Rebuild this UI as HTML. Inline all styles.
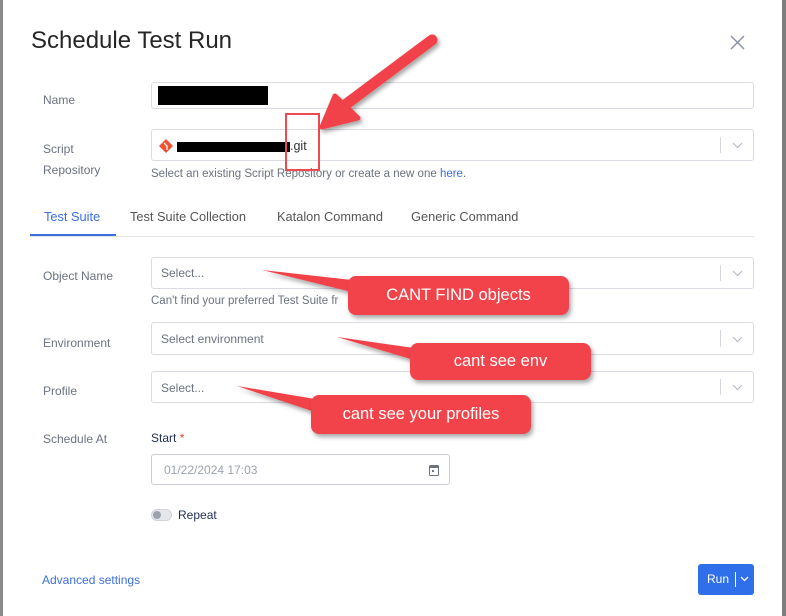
<!DOCTYPE html>
<html><head><meta charset="utf-8"><style>
*{margin:0;padding:0;box-sizing:border-box}
body{width:786px;height:616px;overflow:hidden;background:#fff;font-family:"Liberation Sans",sans-serif;position:relative}
.a{position:absolute}
.lbl{position:absolute;left:43px;font-size:12px;color:#6b7280}
.inp{position:absolute;left:151px;width:603px;border:1px solid #d9dde3;border-radius:3px;background:#fff}
.ph{position:absolute;left:9px;font-size:12px;color:#6b7280}
.sep{position:absolute;right:32px;top:7px;bottom:7px;border-left:1px solid #d4d8de}
.chev{position:absolute;right:10px;top:50%;margin-top:-5px}
.co{position:absolute;background:#f2434a;color:#fff;font-size:16.5px;border-radius:8px;text-align:center;box-shadow:2px 3px 5px rgba(0,0,0,.35)}
.tab{position:absolute;top:209px;font-size:12.8px;color:#555}
</style></head><body>
<div class="a" style="left:0;top:0;width:3px;height:616px;background:#8a8a8a"></div>
<div class="a" style="left:782px;top:0;width:4px;height:616px;background:#7d7d7d"></div>
<div class="a" style="left:31px;top:27px;font-size:24px;color:#262626">Schedule Test Run</div>
<svg class="a" style="left:730px;top:35px" width="15" height="15"><path d="M1 1L14 14M14 1L1 14" stroke="#8a94a6" stroke-width="1.5"/></svg>

<div class="lbl" style="top:93px">Name</div>
<div class="inp" style="top:82px;height:27px"></div>
<div class="a" style="left:158px;top:86px;width:110px;height:19px;background:#000"></div>

<div class="lbl" style="top:139px;line-height:21px">Script<br>Repository</div>
<div class="inp" style="top:129px;height:32px"><div class="sep"></div>
<svg class="chev" width="11" height="10"><path d="M1 3l4.5 4.5L10 3" stroke="#b8bec7" fill="none" stroke-width="1.2"/></svg></div>
<svg class="a" style="left:159px;top:139px" width="14" height="14"><path d="M7 0L14 7L7 14L0 7Z" fill="#f05133"/><path d="M5 4l3 3v4" stroke="#fff" stroke-width="1.3" fill="none"/></svg>
<div class="a" style="left:177px;top:142px;width:113px;height:10px;background:#000"></div>
<div class="a" style="left:290px;top:139px;font-size:12.5px;color:#333">.git</div>
<div class="a" style="left:151px;top:168px;font-size:11.5px;color:#6b7280">Select an existing Script Repository or create a new one <span style="color:#3b6fe0">here</span>.</div>
<div class="a" style="left:285px;top:113px;width:35px;height:58px;border:2px solid #ee4a4f"></div>

<div class="tab" style="left:44px;color:#3b6fe0">Test Suite</div>
<div class="tab" style="left:130px">Test Suite Collection</div>
<div class="tab" style="left:277px">Katalon Command</div>
<div class="tab" style="left:411px">Generic Command</div>
<div class="a" style="left:30px;top:236px;width:724px;height:1px;background:#e3e6ea"></div>
<div class="a" style="left:30px;top:234px;width:86px;height:2px;background:#3b6fe0"></div>

<div class="lbl" style="top:269px">Object Name</div>
<div class="inp" style="top:257px;height:32px"><div class="ph" style="top:8px">Select...</div><div class="sep"></div>
<svg class="chev" width="11" height="10"><path d="M1 3l4.5 4.5L10 3" stroke="#b8bec7" fill="none" stroke-width="1.2"/></svg></div>
<div class="a" style="left:151px;top:295px;font-size:11.5px;color:#6b7280">Can't find your preferred Test Suite fr</div>

<div class="lbl" style="top:336px">Environment</div>
<div class="inp" style="top:322px;height:33px"><div class="ph" style="top:9px">Select environment</div><div class="sep"></div>
<svg class="chev" width="11" height="10"><path d="M1 3l4.5 4.5L10 3" stroke="#b8bec7" fill="none" stroke-width="1.2"/></svg></div>

<div class="lbl" style="top:384px">Profile</div>
<div class="inp" style="top:371px;height:32px"><div class="ph" style="top:9px">Select...</div><div class="sep"></div>
<svg class="chev" width="11" height="10"><path d="M1 3l4.5 4.5L10 3" stroke="#b8bec7" fill="none" stroke-width="1.2"/></svg></div>

<div class="lbl" style="top:432px">Schedule At</div>
<div class="a" style="left:151px;top:431px;font-size:12px;color:#1f2d5a">Start <span style="color:#e53935">*</span></div>
<div class="a" style="left:151px;top:454px;width:299px;height:31px;border:1px solid #c9ced6;border-radius:3px"><div class="a" style="left:12px;top:8px;font-size:12px;color:#9ca3af">01/22/2024 17:03</div>
<svg class="a" style="left:277px;top:9px" width="10" height="12"><rect x="0.5" y="1.5" width="9" height="10" rx="1" fill="none" stroke="#6b7280"/><rect x="0.5" y="1.5" width="9" height="2.5" fill="#6b7280"/><rect x="3" y="6" width="2" height="2" fill="#6b7280"/></svg></div>

<div class="a" style="left:151px;top:509px;width:21px;height:12px;border-radius:6px;background:#e5e7eb;border:1px solid #cfd3d9"><div class="a" style="left:1px;top:1px;width:8px;height:8px;border-radius:50%;background:#9ca3af"></div></div>
<div class="a" style="left:178px;top:508px;font-size:12px;color:#1f2d5a">Repeat</div>

<div class="a" style="left:42px;top:573px;font-size:12px;color:#3b6fe0">Advanced settings</div>
<div class="a" style="left:698px;top:564px;width:56px;height:31px;background:#2f6fea;border-radius:3px;color:#fff;font-size:12px"><span class="a" style="left:9px;top:8px">Run</span><div class="a" style="left:37px;top:8px;width:1px;height:15px;background:#fff"></div><svg class="a" style="left:42px;top:11px" width="9" height="8"><path d="M1 2l3.5 3.5L8 2" stroke="#fff" fill="none" stroke-width="1.3"/></svg></div>

<svg class="a" style="left:0;top:0" width="786" height="616">
<defs><filter id="s"><feDropShadow dx="2" dy="3" stdDeviation="2" flood-opacity=".35"/></filter></defs>
<g filter="url(#s)" fill="#f2434a">
<path d="M432 40L345 105" stroke="#f2434a" stroke-width="11" stroke-linecap="round"/>
<path d="M322 127L335 96L358 118Z" stroke="#f2434a" stroke-width="5" stroke-linejoin="round"/>
<path d="M262 270L352 280L352 292Z"/>
<path d="M337 337L414 348L414 360Z"/>
<path d="M237 386L315 399L315 412Z"/>
</g>
</svg>
<div class="co" style="left:348px;top:276px;width:221px;height:39px;line-height:39px">CANT FIND objects</div>
<div class="co" style="left:410px;top:343px;width:181px;height:37px;line-height:37px">cant see env</div>
<div class="co" style="left:311px;top:395px;width:220px;height:39px;line-height:39px">cant see your profiles</div>
</body></html>
